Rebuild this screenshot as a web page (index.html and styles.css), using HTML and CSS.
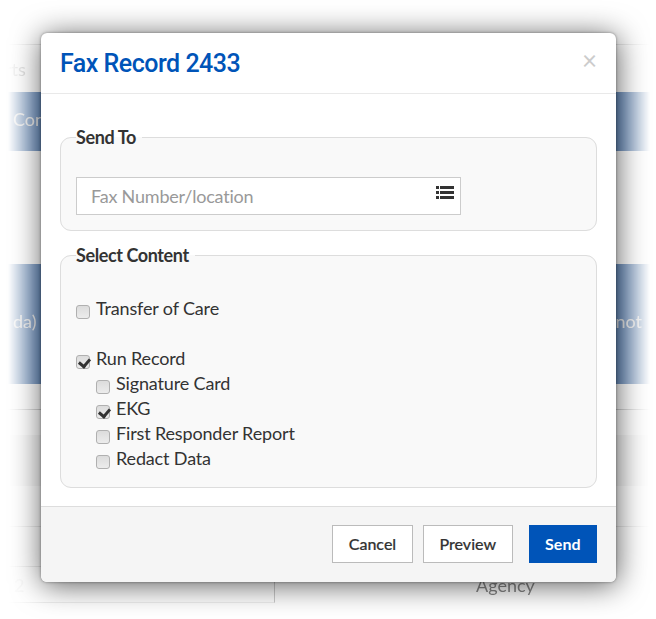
FILE: index.html
```html
<!DOCTYPE html>
<html lang="en">
  <head>
    <meta charset="UTF-8" />
    <meta name="viewport" content="width=device-width, initial-scale=1.0" />
    <title>Fax Record</title>
    <link rel="stylesheet" href="styles.css">
  </head>
  <body>
    <!-- Page behind the dialog -->
    <div class="page">
      <div class="tabs"><span class="tab-text">rts</span></div>
      <div class="band band-short"><span class="band-left">Contact</span></div>
      <div class="gap-a"></div>
      <div class="band band-tall">
        <span class="band-left">da)</span>
        <span class="band-right">not</span>
      </div>
      <div class="row row-a"></div>
      <div class="row row-b"></div>
      <div class="row row-c"></div>
      <div class="row row-d"></div>
      <div class="row row-e">
        <span class="cell-num">2</span>
        <span class="cell-agency">Agency</span>
      </div>
    </div>

    <!-- Fax dialog -->
    <main class="modal">
      <header class="modal-header">
        <h1>Fax Record 2433</h1>
        <span class="close">×</span>
      </header>

      <div class="modal-body">
        <fieldset>
          <legend>Send To</legend>
          <div class="input-wrap">
            <input type="text" placeholder="Fax Number/location" />
            <svg class="list-icon" width="18" height="14" viewBox="0 0 18 14">
              <path d="M0 0h3v3H0zM4 0h14v3H4zM0 5h3v3H0zM4 5h14v3H4zM0 10h3v3H0zM4 10h14v3H4z" fill="#333" />
            </svg>
          </div>
        </fieldset>

        <fieldset class="content-set">
          <legend>Select Content</legend>
          <label class="check top"><input type="checkbox" />Transfer of Care</label>
          <label class="check group"><input type="checkbox" checked />Run Record</label>
          <label class="check sub"><input type="checkbox" />Signature Card</label>
          <label class="check sub"><input type="checkbox" checked />EKG</label>
          <label class="check sub"><input type="checkbox" />First Responder Report</label>
          <label class="check sub"><input type="checkbox" />Redact Data</label>
        </fieldset>
      </div>

      <footer class="modal-footer">
        <button class="btn">Cancel</button>
        <button class="btn">Preview</button>
        <button class="btn primary">Send</button>
      </footer>
    </main>
  </body>
</html>
```

FILE: styles.css
```css
/* Reset & Base Styles */
* {
  margin: 0;
  padding: 0;
  box-sizing: border-box;
  font-family: "Lato", "Liberation Sans", sans-serif;
}

html,
body {
  height: 619px;
  overflow: hidden;
  background-color: #fff;
}

body {
  position: relative;
  color: #333;
}

/* Page behind the dialog, faded out towards the edges */
.page {
  height: 619px;
  -webkit-mask-image: linear-gradient(to right, transparent 8px, #000 44px, #000 614px, transparent 650px);
  mask-image: linear-gradient(to right, transparent 8px, #000 44px, #000 614px, transparent 650px);
}

.tabs {
  height: 92px;
  padding-top: 56px;
  padding-left: 5px;
  background: linear-gradient(#fff 44px, #e4e4e4 44px, #e4e4e4 45px, #fff 45px);
  color: #bbb;
  font-size: 18px;
  line-height: 26px;
}

.band {
  background-color: #5f86b8;
  color: #e4e4e4;
  font-size: 18px;
  display: flex;
  align-items: center;
  justify-content: space-between;
  padding-bottom: 6px;
}

.band-short {
  height: 59px;
}

.band-tall {
  height: 120px;
}

.band-left {
  margin-left: 13px;
}

.band-right {
  margin-right: 14px;
}

.gap-a {
  height: 113px;
}

.row-a {
  height: 25px;
}

.row-b {
  height: 26px;
  border-top: 1px solid #ccc;
}

.row-c {
  height: 51px;
  background-color: #f4f4f4;
}

.row-d {
  height: 80px;
  background: linear-gradient(#fff 40px, #e4e4e4 40px, #e4e4e4 41px, #fff 41px);
}

.row-e {
  height: 37px;
  width: 275px;
  border-top: 1px solid #e4e4e4;
  border-right: 1px solid #ccc;
  border-bottom: 1px solid #eee;
  display: flex;
  align-items: center;
  position: relative;
  color: #888;
  font-size: 18px;
}

.cell-num {
  margin-left: 14px;
  color: #eee;
}

/* Sits in the next column of the same table row */
.cell-agency {
  position: absolute;
  left: 476px;
  top: 7px;
  white-space: nowrap;
}

/* Modal styles */
.modal {
  position: absolute;
  left: 41px;
  top: 33px;
  width: 575px;
  height: 549px;
  display: flex;
  flex-direction: column;
  background-color: #fff;
  border-radius: 6px;
  box-shadow: 1px 3px 30px rgba(0, 0, 0, 0.65), 0 0 3px rgba(0, 0, 0, 0.4);
}

.modal-header {
  height: 61px;
  flex-shrink: 0;
  display: flex;
  align-items: center;
  justify-content: space-between;
  padding: 0 19px;
  border-bottom: 1px solid #e9e9e9;
}

h1 {
  font-family: "Roboto", sans-serif;
  font-size: 25px;
  font-weight: 500;
  letter-spacing: -0.5px;
  color: #0054b8;
}

.close {
  font-size: 26px;
  line-height: 26px;
  color: #ccc;
  margin-right: 0;
  margin-top: -6px;
}

.modal-body {
  flex: 1;
  padding: 32px 19px 0;
}

fieldset {
  height: 105px;
  background-color: #f9f9f9;
  border: 1px solid #ddd;
  border-radius: 11px;
  padding: 29px 15px 0;
}

legend {
  font-size: 18px;
  font-weight: 700;
  line-height: 22px;
  letter-spacing: -0.4px;
  padding: 0 6px 0 0;
  color: #333;
}

.content-set {
  height: 244px;
  margin-top: 13px;
  padding-top: 30px;
}

.input-wrap {
  position: relative;
  width: 385px;
}

.input-wrap input {
  width: 100%;
  height: 38px;
  padding: 0 14px;
  border: 1px solid #ccc;
  background-color: #fff;
  font-size: 18px;
  letter-spacing: -0.2px;
  color: #333;
  outline: none;
}

.input-wrap input::placeholder {
  color: #999;
  opacity: 1;
}

.list-icon {
  position: absolute;
  right: 7px;
  top: 9px;
}

/* Checkbox rows */
.check {
  display: flex;
  align-items: flex-start;
  height: 25px;
  font-size: 18px;
  line-height: 25px;
  letter-spacing: -0.15px;
  color: #333;
}

.check input {
  appearance: none;
  -webkit-appearance: none;
  position: relative;
  flex-shrink: 0;
  width: 14px;
  height: 14px;
  margin: 9px 6px 0 0;
  background: linear-gradient(#dcdcdc, #ececec);
  border: 1px solid #b0b0b0;
  border-radius: 3px;
}

.check input:checked::after {
  content: "";
  position: absolute;
  left: 2px;
  top: 2px;
  width: 8px;
  height: 5px;
  border-left: 3px solid #333;
  border-bottom: 3px solid #333;
  transform: rotate(-50deg);
}

.group {
  margin-top: 25px;
}

.sub {
  padding-left: 20px;
}

.modal-footer {
  height: 76px;
  flex-shrink: 0;
  display: flex;
  justify-content: flex-end;
  align-items: center;
  gap: 10px;
  padding: 0 19px 2px;
  background-color: #f5f5f5;
  border-top: 1px solid #ddd;
  border-radius: 0 0 6px 6px;
}

.btn {
  height: 38px;
  min-width: 81px;
  padding: 0 15.5px;
  background-color: #fff;
  border: 1px solid #bbb;
  font-size: 16px;
  font-weight: 500;
  -webkit-text-stroke: 0.2px #333;
  color: #333;
}

.btn.primary {
  min-width: 68px;
  margin-left: 6px;
  background-color: #0054b8;
  border-color: #0054b8;
  color: #fff;
  font-weight: 700;
  -webkit-text-stroke: 0;
}
```
